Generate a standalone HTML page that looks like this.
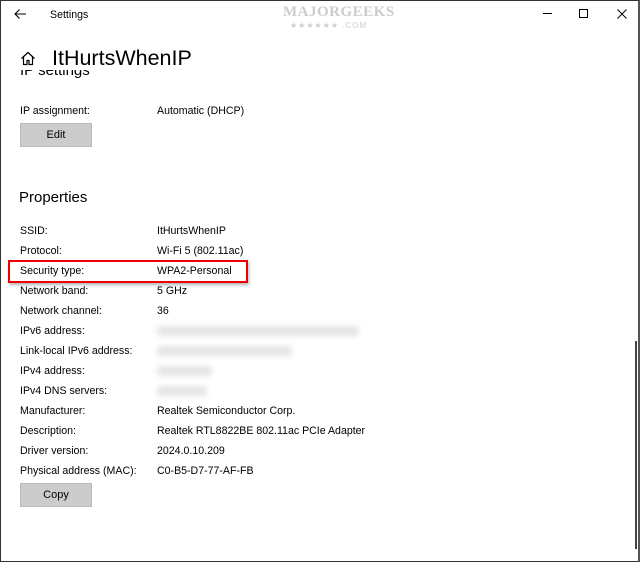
<!DOCTYPE html>
<html><head><style>
*{margin:0;padding:0;box-sizing:border-box}
body{width:640px;height:562px;background:#fff;font-family:"Liberation Sans",Arial,sans-serif;color:#000;position:relative;overflow:hidden}
.frame{position:absolute;left:0;top:0;width:640px;height:562px;border:1px solid #333;border-right:2px solid #555}
.t{position:absolute;font-size:10.6px;white-space:nowrap;margin-top:1px}
.btn{position:absolute;left:20px;width:72px;height:24px;background:#ccc;border:1px solid #bbb;font-size:11px;text-align:center;line-height:22px}
.blur{position:absolute;height:10px;background:#e4e4e4;filter:blur(3px);border-radius:4px}
</style></head><body>
<div class="frame"></div>
<svg style="position:absolute;left:13px;top:8px" width="14" height="12" viewBox="0 0 14 12"><path d="M13 6H2M6.5 1.5L2 6l4.5 4.5" fill="none" stroke="#000" stroke-width="1.1"/></svg>
<div class="t" style="left:50px;top:8px">Settings</div>
<div class="t" style="left:283px;top:3px;font-family:'Liberation Serif',serif;font-weight:bold;font-size:15px;color:#ccc;letter-spacing:0.5px">MAJORGEEKS</div>
<div class="t" style="left:290px;top:20px;font-size:8px;color:#ccc;letter-spacing:1px">★★★★★★ .COM</div>
<div style="position:absolute;left:543px;top:13px;width:9px;height:1px;background:#000"></div>
<div style="position:absolute;left:579px;top:9px;width:9px;height:9px;border:1px solid #000"></div>
<svg style="position:absolute;left:617px;top:9px" width="10" height="10"><path d="M0.5 0.5L9.5 9.5M9.5 0.5L0.5 9.5" stroke="#000" stroke-width="1"/></svg>
<svg style="position:absolute;left:20px;top:51px" width="16" height="15" viewBox="0 0 16 15"><path d="M1.5 7.5L8 1.5l6.5 6M3.5 6v7.5h3.5v-4h2v4h3.5V6" fill="none" stroke="#000" stroke-width="1.2"/></svg>
<div class="t" style="left:52px;top:45px;font-size:21.5px">ItHurtsWhenIP</div>
<div style="position:absolute;left:0;top:70px;width:600px;height:14px;overflow:hidden"><div class="t" style="left:20px;top:-9px;font-size:15px">IP settings</div></div>
<div class="t" style="left:20px;top:104px">IP assignment:</div>
<div class="t" style="left:157px;top:104px">Automatic (DHCP)</div>
<div class="btn" style="top:123px">Edit</div>
<div class="t" style="left:19px;top:188px;font-size:15px">Properties</div>
<div class="t" style="left:20px;top:224px">SSID:</div><div class="t" style="left:157px;top:224px">ItHurtsWhenIP</div>
<div class="t" style="left:20px;top:244px">Protocol:</div><div class="t" style="left:157px;top:244px">Wi-Fi 5 (802.11ac)</div>
<div class="t" style="left:20px;top:264px">Security type:</div><div class="t" style="left:157px;top:264px">WPA2-Personal</div>
<div style="position:absolute;left:8px;top:260px;width:240px;height:23px;border:2px solid #e00;box-shadow:1px 2px 3px rgba(0,0,0,.3)"></div>
<div class="t" style="left:20px;top:284px">Network band:</div><div class="t" style="left:157px;top:284px">5 GHz</div>
<div class="t" style="left:20px;top:304px">Network channel:</div><div class="t" style="left:157px;top:304px">36</div>
<div class="t" style="left:20px;top:324px">IPv6 address:</div><div class="blur" style="left:157px;top:326px;width:202px"></div>
<div class="t" style="left:20px;top:344px">Link-local IPv6 address:</div><div class="blur" style="left:157px;top:346px;width:135px"></div>
<div class="t" style="left:20px;top:364px">IPv4 address:</div><div class="blur" style="left:157px;top:366px;width:55px"></div>
<div class="t" style="left:20px;top:384px">IPv4 DNS servers:</div><div class="blur" style="left:157px;top:386px;width:50px"></div>
<div class="t" style="left:20px;top:404px">Manufacturer:</div><div class="t" style="left:157px;top:404px">Realtek Semiconductor Corp.</div>
<div class="t" style="left:20px;top:424px">Description:</div><div class="t" style="left:157px;top:424px">Realtek RTL8822BE 802.11ac PCIe Adapter</div>
<div class="t" style="left:20px;top:444px">Driver version:</div><div class="t" style="left:157px;top:444px">2024.0.10.209</div>
<div class="t" style="left:20px;top:464px">Physical address (MAC):</div><div class="t" style="left:157px;top:464px">C0-B5-D7-77-AF-FB</div>
<div class="btn" style="top:483px">Copy</div>
<div style="position:absolute;left:635px;top:341px;width:2px;height:208px;background:#444"></div>
</body></html>
